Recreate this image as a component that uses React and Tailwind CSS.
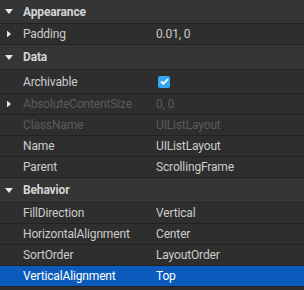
const rows = [
  { type: 'cat', label: 'Appearance', first: true },
  { type: 'prop', label: 'Padding', value: '0.01, 0', arrow: true },
  { type: 'cat', label: 'Data' },
  { type: 'prop', label: 'Archivable', check: true, tall: true },
  { type: 'prop', label: 'AbsoluteContentSize', value: '0, 0', arrow: true, disabled: true },
  { type: 'prop', label: 'ClassName', value: 'UIListLayout', disabled: true },
  { type: 'prop', label: 'Name', value: 'UIListLayout' },
  { type: 'prop', label: 'Parent', value: 'ScrollingFrame' },
  { type: 'cat', label: 'Behavior' },
  { type: 'prop', label: 'FillDirection', value: 'Vertical' },
  { type: 'prop', label: 'HorizontalAlignment', value: 'Center' },
  { type: 'prop', label: 'SortOrder', value: 'LayoutOrder' },
  { type: 'prop', label: 'VerticalAlignment', value: 'Top', selected: true },
];

function DownArrow() {
  return (
    <svg width="8" height="5" viewBox="0 0 8 5" className="ml-[5px] mr-[10px]">
      <path d="M0 0H8L4 5Z" fill="#e6e6e6" />
    </svg>
  );
}

function RightArrow() {
  return (
    <svg width="4" height="7" viewBox="0 0 4 7" className="absolute left-[7px] top-1/2 -translate-y-1/2">
      <path d="M0 0L4 3.5L0 7Z" fill="#e6e6e6" />
    </svg>
  );
}

function Check() {
  return (
    <span className="flex h-[12px] w-[12px] items-center justify-center rounded-[2px] bg-[#35a5f5]">
      <svg width="9" height="7" viewBox="0 0 9 7">
        <path d="M1 3.5L3.4 5.7L8 1.2" fill="none" stroke="#ffffff" strokeWidth="1.8" />
      </svg>
    </span>
  );
}

export default function App() {
  return (
    <div className="h-[290px] w-[304px] overflow-hidden bg-[#2e2e2e] text-[12px] tracking-[-0.15px] text-[#cccccc] font-['Roboto',sans-serif]">
      {rows.map((r) =>
        r.type === 'cat' ? (
          <div
            key={r.label}
            className={`flex items-center border-b border-[#222222] bg-[#353535] font-bold text-[#d4d4d4] ${r.first ? 'h-[24px]' : 'h-[25px]'}`}
          >
            <DownArrow />
            <span>{r.label}</span>
          </div>
        ) : (
          <div
            key={r.label}
            className={`flex border-b border-[#222222] ${r.tall ? 'h-[24px]' : 'h-[21px]'} ${r.selected ? 'bg-[#0b5bbd] text-white' : ''}`}
          >
            <div className={`relative flex w-[152px] items-center pl-[23px] ${r.disabled ? 'text-[#5c5c5c]' : ''}`}>
              {r.arrow && <RightArrow />}
              <span className="whitespace-nowrap">{r.label}</span>
            </div>
            <div className={`flex flex-1 items-center pl-[4px] ${r.disabled ? 'text-[#5c5c5c]' : ''}`}>
              {r.check ? <span className="ml-[2px]"><Check /></span> : <span className="whitespace-nowrap">{r.value}</span>}
            </div>
          </div>
        )
      )}
    </div>
  );
}
